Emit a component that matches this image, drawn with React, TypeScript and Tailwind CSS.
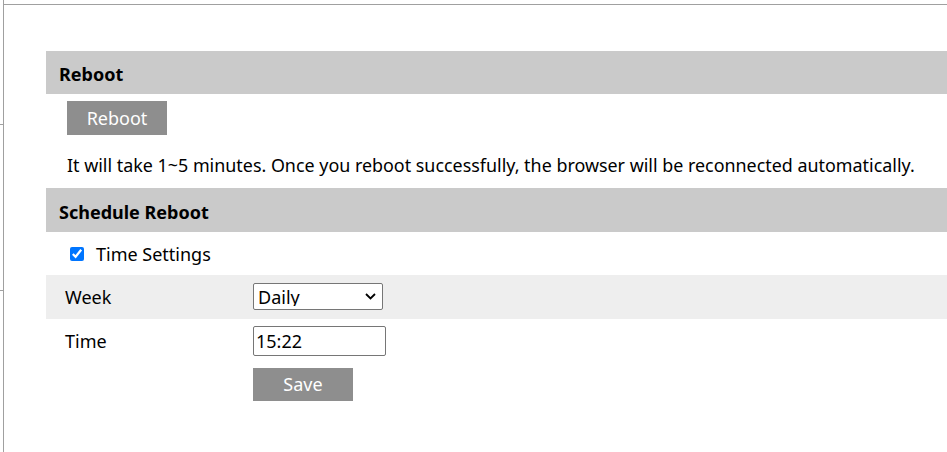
import { useState } from "react";

const Row = ({ label, children, shaded }: { label: string; children: React.ReactNode; shaded?: boolean }) => (
  <div className={`flex items-center h-[44px] ${shaded ? "bg-[#eeeeee]" : ""}`}>
    <div className="w-[207px] pl-[19px]">{label}</div>
    <div>{children}</div>
  </div>
);

const Header = ({ title, tall }: { title: string; tall?: boolean }) => (
  <div className={`${tall ? "h-[44px]" : "h-[43px]"} bg-[#cacaca] flex items-center pl-[13px] pt-[4px] font-bold`}>
    {title}
  </div>
);

export default function App() {
  const [week, setWeek] = useState("Daily");
  const [time, setTime] = useState("15:22");

  return (
    <div
      className="flex w-[947px] h-[452px] overflow-hidden bg-white text-black text-[18px]"
      style={{ fontFamily: '"Noto Sans", "Liberation Sans", sans-serif' }}
    >
      {/* sidebar edge */}
      <div className="w-[3px] flex-none">
        <div className="h-px bg-[#a0a0a0] mt-[124px]" />
        <div className="h-px bg-[#a0a0a0] mt-[165px]" />
      </div>

      <div className="flex-1 border-l border-[#a0a0a0] min-w-0">
        <div className="mt-[4px] border-t border-[#a0a0a0]">
          <div className="pl-[42px] pt-[46px] min-w-[1000px]">
            <Header title="Reboot" />
            <div className="pl-[21px] pt-[7px]">
              <button className="w-[100px] h-[34px] bg-[#8e8e8e] text-white">Reboot</button>
              <p className="mt-[18px] mb-[11px] leading-[24px] text-[17.9px] whitespace-nowrap">
                It will take 1~5 minutes. Once you reboot successfully, the browser will be reconnected automatically.
              </p>
            </div>

            <Header title="Schedule Reboot" tall />
            <div className="flex items-center h-[43px] pl-[24px] pt-[1px]">
              <input type="checkbox" defaultChecked className="w-[14px] h-[14px] accent-[#0075ff] m-0" />
              <span className="ml-[12px]">Time Settings</span>
            </div>
            <Row label="Week" shaded>
              <div className="relative w-[130px]">
                <select
                  value={week}
                  onChange={(e) => setWeek(e.target.value)}
                  className="appearance-none w-full h-[27px] border border-[#767676] rounded-[2px] bg-white pl-[4px] leading-none"
                >
                  <option>Daily</option>
                  <option>Monday</option>
                  <option>Tuesday</option>
                  <option>Wednesday</option>
                  <option>Thursday</option>
                  <option>Friday</option>
                  <option>Saturday</option>
                  <option>Sunday</option>
                </select>
                <svg
                  className="absolute right-[7px] top-[10px] pointer-events-none"
                  width="11"
                  height="7"
                  viewBox="0 0 11 7"
                >
                  <path d="M1 1l4.5 4.5L10 1" fill="none" stroke="#000" strokeWidth="1.8" />
                </svg>
              </div>
            </Row>
            <Row label="Time">
              <input
                value={time}
                onChange={(e) => setTime(e.target.value)}
                className="w-[133px] h-[30px] border border-[#767676] rounded-[2px] px-[2px]"
              />
            </Row>
            <div className="pl-[207px] pt-[5px]">
              <button className="w-[100px] h-[33px] bg-[#8e8e8e] text-white">Save</button>
            </div>
          </div>
        </div>
      </div>
    </div>
  );
}
